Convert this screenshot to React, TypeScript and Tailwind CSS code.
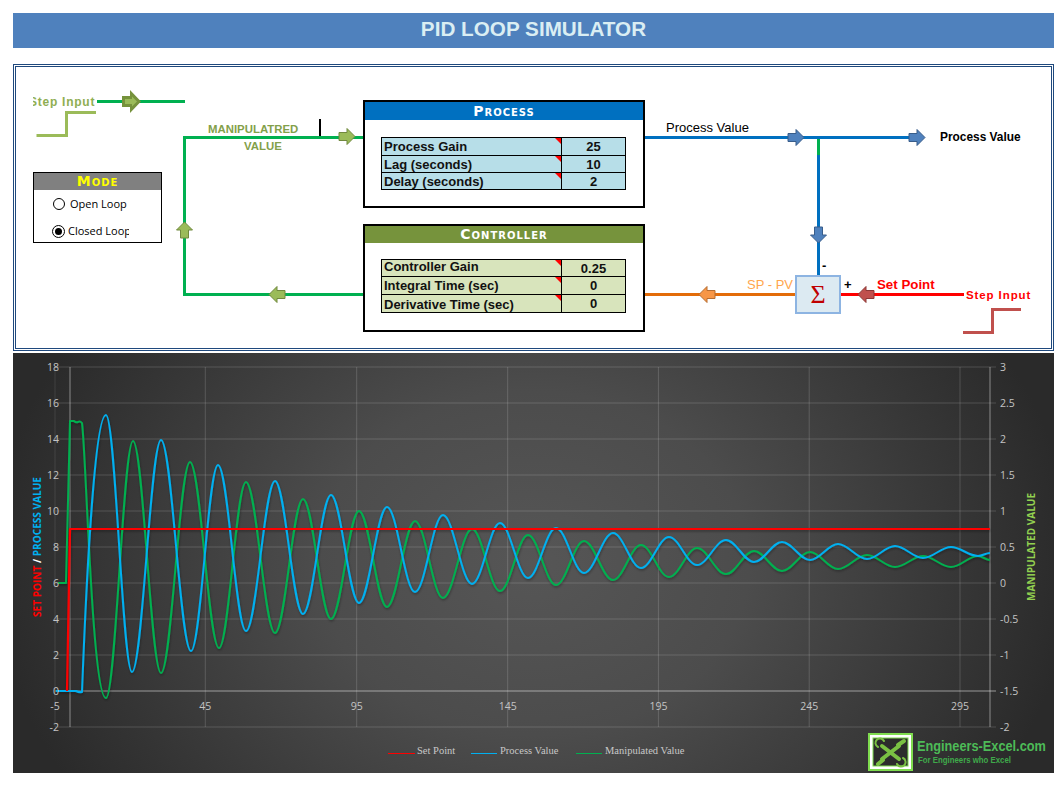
import React from "react";

type Pt = [number, number];

const smooth = (pts: Pt[], k = 0.36) => {
  let d = "";
  for (let i = 1; i < pts.length; i++) {
    const [x0, y0] = pts[i - 1];
    const [x1, y1] = pts[i];
    const dx = x1 - x0;
    d += ` C${(x0 + dx * k).toFixed(1)},${y0} ${(x1 - dx * k).toFixed(1)},${y1} ${x1},${y1}`;
  }
  return d;
};

const bluePts: Pt[] = [
  [106, 415], [132, 672], [161, 440], [191, 651], [218, 465], [246, 631], [275, 481], [303, 614],
  [331, 495], [359, 603], [387, 507], [415, 592], [443, 515], [472, 584], [500, 523], [528, 578],
  [556, 528], [584, 573], [613, 533], [641, 568], [669, 537], [697, 565], [726, 540], [754, 562],
  [782, 542], [810, 560], [838, 544], [867, 559], [895, 546], [923, 558], [951, 547], [978, 556], [990, 553],
];
const greenPts: Pt[] = [
  [106, 698], [133, 441], [161, 673], [190, 462], [219, 648], [246, 482], [275, 633], [303, 499],
  [331, 619], [359, 511], [387, 607], [415, 521], [443, 598], [472, 529], [500, 591], [528, 535],
  [556, 585], [584, 541], [613, 580], [641, 545], [669, 577], [697, 548], [726, 574], [754, 551],
  [782, 571], [810, 552], [838, 569], [867, 555], [895, 567], [923, 556], [951, 567], [978, 556], [990, 560],
];

const blueD = "M56,691 L76,691 Q79,692.5 82,692 C84,640 93,415 106,415" + smooth(bluePts);
const greenD =
  "M58,583 L66,583 L70,421 L74,421 Q76,423 78,422 Q80,420.5 82,423 C86,450 92,698 106,698" + smooth(greenPts);

const hGrid = [367, 403, 439, 475, 511, 547, 583, 619, 655, 691, 727];
const vGrid = [205.3, 356.7, 507.7, 658.4, 809.2, 960];
const leftLabels = ["18", "16", "14", "12", "10", "8", "6", "4", "2", "0", "-2"];
const rightLabels = ["3", "2.5", "2", "1.5", "1", "0.5", "0", "-0.5", "-1", "-1.5", "-2"];
const xLabels = ["45", "95", "145", "195", "245", "295"];

const Arrow = ({ x, y, rot = 0, fill, stroke }: { x: number; y: number; rot?: number; fill: string; stroke: string }) => (
  <polygon
    points="-8,-4 0,-4 0,-8 8,0 0,8 0,4 -8,4"
    transform={`translate(${x} ${y}) rotate(${rot})`}
    fill={fill}
    stroke={stroke}
    strokeWidth="1"
  />
);

const Flag = () => (
  <span className="absolute right-0 top-0 h-0 w-0 border-l-[6px] border-t-[6px] border-l-transparent border-t-[#ff0000]" />
);

type Row = { label: string; value: string; h: string; pad?: string };

const ParamTable = ({ rows, bg }: { rows: Row[]; bg: string }) => (
  <table className={`w-[245px] table-fixed border-collapse text-[13px] font-bold leading-none text-[#111] ${bg}`}>
    <tbody>
      {rows.map((r) => (
        <tr key={r.label} className={r.h}>
          <td className={`relative w-[180px] border border-black pl-[2px] ${r.pad ?? ""}`}>
            {r.label}
            <Flag />
          </td>
          <td className="border border-black text-center">{r.value}</td>
        </tr>
      ))}
    </tbody>
  </table>
);

const capsHead =
  "text-center font-['DejaVu_Sans',sans-serif] font-bold [font-variant-caps:small-caps] tracking-[1px] leading-none";

export default function App() {
  return (
    <div className="flex h-[793px] w-[1054px] flex-col overflow-hidden bg-white pl-[13px] pt-[13px] font-['Liberation_Sans',Arial,sans-serif]">
      <div className="flex h-[35px] shrink-0 items-center justify-center bg-[#4f81bd] pb-[4px] text-[20.7px] font-bold text-[#daeef3]">
        PID LOOP SIMULATOR
      </div>

      <div className="mt-[16px] h-[287px] shrink-0 border-[3px] border-double border-[#1f497d]">
        <div className="relative h-full w-full">
          <svg className="absolute inset-0" width="1035" height="281" viewBox="16 67 1035 281" fill="none">
            <path d="M97,101.5 H185" stroke="#00b050" strokeWidth="3" />
            <path d="M36.5,135.5 H66.5 V112.5 H96" stroke="#9bbb59" strokeWidth="3" />
            <polygon points="122,96 130,96 130,90 141,101.5 130,113 130,107 122,107" fill="#76923c" />
            <polygon points="125,99 132,99 132,96.5 137,101.5 132,106.5 132,104 125,104" fill="#9bbb59" />

            <path d="M363,137.5 H184.5 V294.5 H363" stroke="#00b050" strokeWidth="3" />
            <path d="M320,119 V136" stroke="#000" strokeWidth="2" />
            <Arrow x={347} y={136.5} fill="#9bbb59" stroke="#71893f" />
            <Arrow x={184.5} y={230} rot={-90} fill="#9bbb59" stroke="#71893f" />
            <Arrow x={277} y={294.5} rot={180} fill="#9bbb59" stroke="#71893f" />

            <path d="M645,137.5 H910" stroke="#0070c0" strokeWidth="3" />
            <path d="M818.5,137 V276" stroke="#0070c0" strokeWidth="3" />
            <path d="M818.5,139 V155" stroke="#00b050" strokeWidth="3" />
            <Arrow x={796} y={137.5} fill="#4f81bd" stroke="#385d8a" />
            <Arrow x={917} y={137.5} fill="#4f81bd" stroke="#385d8a" />
            <Arrow x={818.5} y={235} rot={90} fill="#4f81bd" stroke="#385d8a" />

            <path d="M645,294.5 H796" stroke="#e36c09" strokeWidth="3" />
            <Arrow x={707} y={294.5} rot={180} fill="#f79646" stroke="#b66d31" />
            <path d="M840,294.5 H964" stroke="#ff0000" strokeWidth="3" />
            <Arrow x={866} y={294.5} rot={180} fill="#c0504d" stroke="#8c3836" />
            <path d="M963,332.5 H992.5 V309.5 H1021" stroke="#c0504d" strokeWidth="3" />
          </svg>

          <div className="absolute left-[17px] top-[29px] w-[62px] overflow-hidden whitespace-nowrap">
            <span className="relative -ml-[4px] block text-[12px] font-bold leading-none tracking-[0.75px] text-[#8fae52]">
              Step Input
            </span>
          </div>

          <span className="absolute left-[192px] top-[55px] text-[11.4px] font-bold leading-[14px] text-[#83a04a]">MANIPULATRED</span>
          <span className="absolute left-[228px] top-[72px] text-[11.4px] font-bold leading-[14px] text-[#83a04a]">VALUE</span>

          <div className="absolute left-[17px] top-[105px] h-[71px] w-[129px] border border-black bg-white">
            <div className={`flex h-[17px] items-center justify-center bg-[#808080] pb-[1px] text-[14px] text-[#ffff00] ${capsHead}`}>Mode</div>
            <div className="flex items-center pl-[19px] pt-[7px] font-['Open_Sans',sans-serif] text-[11px] leading-[14px] text-black">
              <span className="mr-[5px] h-[12px] w-[12px] rounded-full border border-black bg-white" />
              Open Loop
            </div>
            <div className="flex w-[95px] items-center overflow-hidden whitespace-nowrap pl-[18px] pt-[13px] font-['Open_Sans',sans-serif] text-[11px] leading-[14px] text-black">
              <span className="mr-[3px] flex h-[13px] w-[13px] shrink-0 items-center justify-center rounded-full border border-black bg-white">
                <span className="h-[7px] w-[7px] rounded-full bg-black" />
              </span>
              Closed Loop
            </div>
          </div>

          <div className="absolute left-[347px] top-[33px] h-[108px] w-[282px] border-2 border-black bg-white">
            <div className={`flex h-[18px] items-center justify-center bg-[#0070c0] text-[14px] text-white ${capsHead}`}>Process</div>
            <div className="ml-[16px] mt-[17px]">
              <ParamTable
                bg="bg-[#b7dee8]"
                rows={[
                  { label: "Process Gain", value: "25", h: "h-[18px]" },
                  { label: "Lag (seconds)", value: "10", h: "h-[17px]" },
                  { label: "Delay (seconds)", value: "2", h: "h-[17px]" },
                ]}
              />
            </div>
          </div>

          <div className="absolute left-[347px] top-[157px] h-[108px] w-[282px] border-2 border-black bg-white">
            <div className={`flex h-[17px] items-center justify-center bg-[#76933c] pb-[1px] text-[14px] text-white ${capsHead}`}>Controller</div>
            <div className="ml-[16px] mt-[16px]">
              <ParamTable
                bg="bg-[#d8e4bc]"
                rows={[
                  { label: "Controller Gain", value: "0.25", h: "h-[17px]", pad: "pb-[3px]" },
                  { label: "Integral Time (sec)", value: "0", h: "h-[18px]" },
                  { label: "Derivative Time (sec)", value: "0", h: "h-[18px]", pad: "pt-[1px]" },
                ]}
              />
            </div>
          </div>

          <span className="absolute left-[650px] top-[54px] text-[13px] leading-[14px] text-black">Process Value</span>
          <span className="absolute left-[924px] top-[64px] text-[11.9px] font-bold leading-[13px] text-black">Process Value</span>

          <span className="absolute left-[806px] top-[192px] text-[13px] font-bold leading-[14px] text-black">-</span>
          <div className="absolute left-[779px] top-[208px] flex h-[39px] w-[46px] items-center justify-center border-2 border-[#8db4e2] bg-[#dceaf2] font-['Liberation_Serif',serif] text-[26px] leading-none text-[#c00000]">
            Σ
          </div>
          <span className="absolute left-[828px] top-[211px] text-[13px] font-bold leading-[14px] text-black">+</span>
          <span className="absolute left-[731px] top-[211px] text-[13px] leading-[14px] text-[#ffa64d]">SP - PV</span>
          <span className="absolute left-[861px] top-[211px] text-[13.3px] font-bold leading-[14px] text-[#ff0000]">Set Point</span>
          <span className="absolute left-[950px] top-[222px] text-[11.5px] font-bold leading-[13px] tracking-[0.9px] text-[#ff0000]">Step Input</span>
        </div>
      </div>

      <div className="relative mt-[2px] h-[420px] shrink-0 bg-[radial-gradient(ellipse_540px_430px_at_520px_210px,#565656_0%,#4c4c4c_40%,#2a2a2a_100%)]">
        <svg className="absolute inset-0" width="1041" height="420" viewBox="13 353 1041 420" fill="none">
          <defs>
            <filter id="sh" x="-5%" y="-5%" width="110%" height="110%">
              <feDropShadow dx="0.5" dy="1.5" stdDeviation="1" floodColor="#000" floodOpacity="0.35" />
            </filter>
          </defs>
          {hGrid.map((y) => (
            <line key={y} x1="55" x2="996" y1={y} y2={y} stroke="#ffffff" strokeOpacity={y === 691 ? 0.5 : 0.16} />
          ))}
          <line x1="55" x2="55" y1="367" y2="727" stroke="#ffffff" strokeOpacity="0.1" />
          {vGrid.map((x) => (
            <line key={x} x1={x} x2={x} y1="367" y2="727" stroke="#ffffff" strokeOpacity="0.16" />
          ))}
          <line x1="70" x2="70" y1="367" y2="727" stroke="#ffffff" strokeOpacity="0.45" />
          <line x1="990" x2="990" y1="367" y2="727" stroke="#ffffff" strokeOpacity="0.45" />

          <g filter="url(#sh)" strokeLinejoin="round" strokeWidth="2">
            <path d={greenD} stroke="#00b050" />
            <path d={blueD} stroke="#00b0f0" />
            <path d="M67,691 L70,529 H990" stroke="#ff0000" strokeWidth="2.2" />
          </g>

          <g fontFamily="'Open Sans', sans-serif" fontSize="10.5" fill="#c4c4c4">
            {leftLabels.map((t, i) => (
              <text key={t} x="59" y={hGrid[i] + 4} textAnchor="end">
                {t}
              </text>
            ))}
            {rightLabels.map((t, i) => (
              <text key={t} x="1000" y={hGrid[i] + 4}>
                {t}
              </text>
            ))}
            <text x="55" y="710" textAnchor="middle">
              -5
            </text>
            {xLabels.map((t, i) => (
              <text key={t} x={vGrid[i]} y="710" textAnchor="middle">
                {t}
              </text>
            ))}
          </g>

          <text
            transform="translate(41 617) rotate(-90)"
            fontFamily="'Open Sans', sans-serif"
            fontWeight="700"
            fontSize="10"
            textLength="140"
            lengthAdjust="spacingAndGlyphs"
          >
            <tspan fill="#ff0000">SET POINT </tspan>
            <tspan fill="#ffffff">/ </tspan>
            <tspan fill="#00b0f0">PROCESS VALUE</tspan>
          </text>
          <text
            transform="translate(1035 601) rotate(-90)"
            fontFamily="'Open Sans', sans-serif"
            fontWeight="700"
            fontSize="10"
            fill="#92d050"
            textLength="108"
            lengthAdjust="spacingAndGlyphs"
          >
            MANIPULATED VALUE
          </text>

          <g stroke="none" fontFamily="'Liberation Serif', serif" fontSize="10.5" fill="#c8c8c8">
            <text x="417" y="754">Set Point</text>
            <text x="500" y="754">Process Value</text>
            <text x="605" y="754">Manipulated Value</text>
          </g>
          <line x1="388" x2="415" y1="753.5" y2="753.5" stroke="#ff0000" strokeWidth="1" />
          <line x1="471" x2="497" y1="753.5" y2="753.5" stroke="#00b0f0" strokeWidth="1" />
          <line x1="576" x2="602" y1="753.5" y2="753.5" stroke="#00b050" strokeWidth="1" />

          <rect x="869" y="734" width="43" height="36" fill="#fff" stroke="#7fdc4f" strokeWidth="2" />
          <rect x="873" y="738" width="35" height="28" fill="#2c2c2c" stroke="#7fdc4f" strokeWidth="1" />
          <g stroke="#7ac143" strokeLinecap="round" fill="none">
            <path d="M882,746 L899,759" strokeWidth="4" />
            <path d="M899,746 L882,759" strokeWidth="4" />
            <path d="M884,741 A4.5,4.5 0 1 0 878,747" strokeWidth="2" />
            <path d="M897,764 A4.5,4.5 0 1 0 903,758" strokeWidth="2" />
            <path d="M898,745 L904,741" strokeWidth="4" />
            <path d="M883,760 L878,764" strokeWidth="4" />
          </g>

          <text
            transform="translate(917 751) scale(0.85 1)"
            fontFamily="'Liberation Sans', sans-serif"
            fontWeight="700"
            fontSize="15"
            fill="#4dbb57"
          >
            Engineers-Excel.com
          </text>
          <text
            transform="translate(918 763) scale(0.87 1)"
            fontFamily="'Liberation Sans', sans-serif"
            fontWeight="700"
            fontSize="9"
            fill="#3fa94a"
          >
            For Engineers who Excel
          </text>
        </svg>
      </div>
    </div>
  );
}
